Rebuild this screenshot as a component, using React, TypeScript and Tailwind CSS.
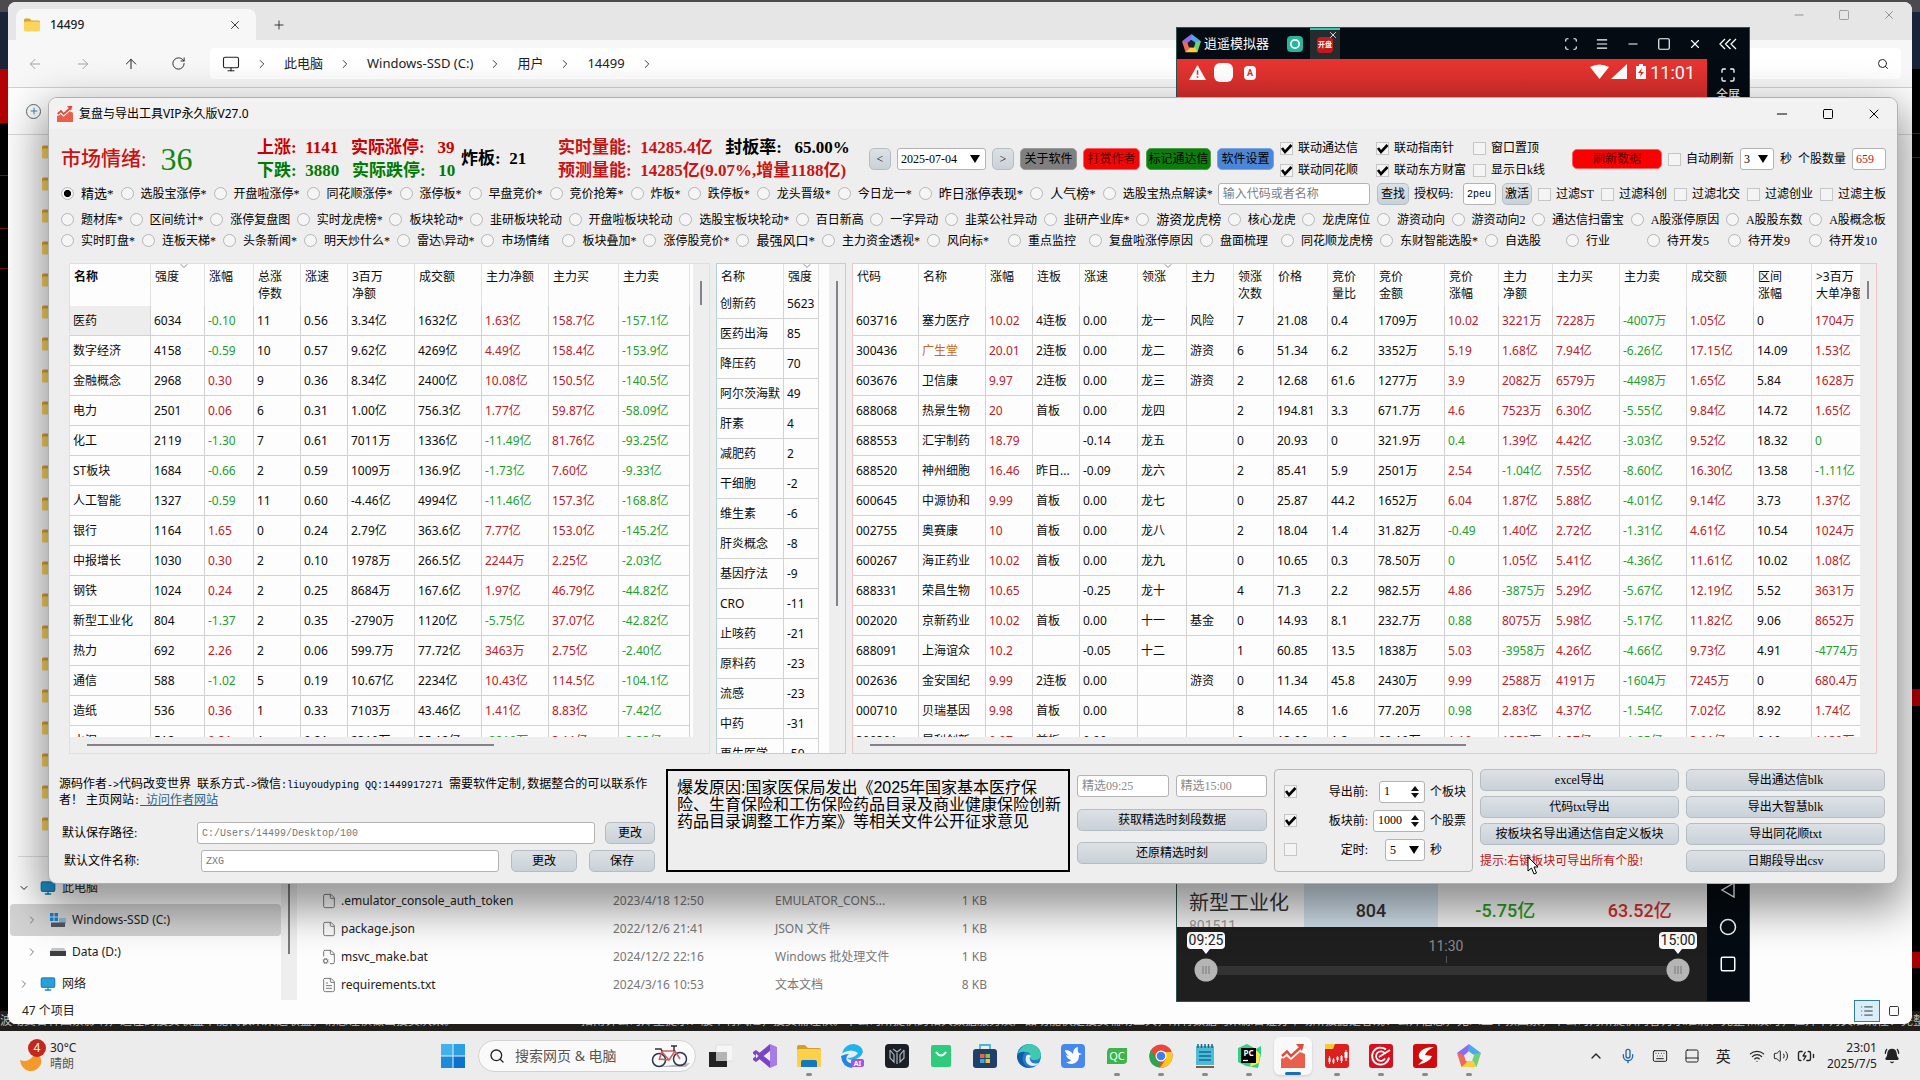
import { useState } from "react";
import type { ReactNode } from "react";
import {
  ArrowLeft,
  ArrowRight,
  ArrowUp,
  BatteryCharging,
  BellRing,
  ChevronRight,
  ChevronDown,
  ChevronUp,
  Circle,
  File,
  FileCog,
  FileText,
  Keyboard,
  List,
  Maximize,
  Menu,
  Mic,
  Minus,
  Monitor,
  PanelBottom,
  Plus,
  RotateCw,
  Scan,
  Search,
  Square,
  Volume2,
  Wifi,
  X,
} from "lucide-react";

const UI = "font-['Noto_Sans','Noto_Sans_CJK_SC',sans-serif]";
const SONG = "font-['Liberation_Serif','Noto_Sans_CJK_SC',serif]";
const MONO = "font-['Liberation_Mono','Noto_Sans_CJK_SC',monospace]";

/* ---------- data ---------- */

const ROW_1 = "精选* 选股宝涨停* 开盘啦涨停* 同花顺涨停* 涨停板* 早盘竞价* 竞价抢筹* 炸板* 跌停板* 龙头晋级* 今日龙一* 昨日涨停表现* 人气榜* 选股宝热点解读*".split(" ");
const ROW_2 = "题材库* 区间统计* 涨停复盘图 实时龙虎榜* 板块轮动* 韭研板块轮动 开盘啦板块轮动 选股宝板块轮动* 百日新高 一字异动 韭菜公社异动 韭研产业库* 游资龙虎榜 核心龙虎 龙虎席位 游资动向 游资动向2 通达信扫雷宝 A股涨停原因 A股股东数 A股概念板".split(" ");
const ROW_3 = "实时盯盘* 连板天梯* 头条新闻* 明天炒什么* 雷达\\异动* 市场情绪 板块叠加* 涨停股竞价* 最强风口* 主力资金透视* 风向标* 重点监控 复盘啦涨停原因 盘面梳理 同花顺龙虎榜 东财智能选股* 自选股 行业 待开发5 待开发9 待开发10".split(" ");
const LARGER = ["精选*", "昨日涨停表现*", "人气榜*", "游资龙虎榜", "最强风口*"];

type Tone = "sign" | "up" | "down" | "bid";
type Column = { title: string; width: string; tone?: Tone };

const parse = (text: string) =>
  text
    .trim()
    .split("\n")
    .map((line) => line.trim().split(/\s+/).map((cell) => (cell === "_" ? "" : cell)));

const SECTOR_COLUMNS: Column[] = [
  { title: "名称", width: "w-[81px]" },
  { title: "强度", width: "w-[54px]" },
  { title: "涨幅", width: "w-[49px]", tone: "sign" },
  { title: "总涨\n停数", width: "w-[47px]" },
  { title: "涨速", width: "w-[47px]" },
  { title: "3百万\n净额", width: "w-[67px]" },
  { title: "成交额", width: "w-[67px]" },
  { title: "主力净额", width: "w-[67px]", tone: "sign" },
  { title: "主力买", width: "w-[70px]", tone: "up" },
  { title: "主力卖", width: "w-[71px]", tone: "down" },
];

const SECTORS = parse(`
  医药 6034 -0.10 11 0.56 3.34亿 1632亿 1.63亿 158.7亿 -157.1亿
  数字经济 4158 -0.59 10 0.57 9.62亿 4269亿 4.49亿 158.4亿 -153.9亿
  金融概念 2968 0.30 9 0.36 8.34亿 2400亿 10.08亿 150.5亿 -140.5亿
  电力 2501 0.06 6 0.31 1.00亿 756.3亿 1.77亿 59.87亿 -58.09亿
  化工 2119 -1.30 7 0.61 7011万 1336亿 -11.49亿 81.76亿 -93.25亿
  ST板块 1684 -0.66 2 0.59 1009万 136.9亿 -1.73亿 7.60亿 -9.33亿
  人工智能 1327 -0.59 11 0.60 -4.46亿 4994亿 -11.46亿 157.3亿 -168.8亿
  银行 1164 1.65 0 0.24 2.79亿 363.6亿 7.77亿 153.0亿 -145.2亿
  中报增长 1030 0.30 2 0.10 1978万 266.5亿 2244万 2.25亿 -2.03亿
  钢铁 1024 0.24 2 0.25 8684万 167.6亿 1.97亿 46.79亿 -44.82亿
  新型工业化 804 -1.37 2 0.35 -2790万 1120亿 -5.75亿 37.07亿 -42.82亿
  热力 692 2.26 2 0.06 599.7万 77.72亿 3463万 2.75亿 -2.40亿
  通信 588 -1.02 5 0.19 10.67亿 2234亿 10.43亿 114.5亿 -104.1亿
  造纸 536 0.36 1 0.33 7103万 43.46亿 1.41亿 8.83亿 -7.42亿
  水泥 512 0.21 1 0.21 2310万 35.12亿 -2210万 3.11亿 -3.33亿
`);

const BRANCH_COLUMNS: Column[] = [
  { title: "名称", width: "w-[67px]" },
  { title: "强度", width: "w-[35px]" },
];

const BRANCHES = parse(`
  创新药 5623
  医药出海 85
  降压药 70
  阿尔茨海默 49
  肝素 4
  减肥药 2
  干细胞 -2
  维生素 -6
  肝炎概念 -8
  基因疗法 -9
  CRO -11
  止咳药 -21
  原料药 -23
  流感 -23
  中药 -31
  再生医学 -50
`);

const STOCK_COLUMNS: Column[] = [
  { title: "代码", width: "w-[66px]" },
  { title: "名称", width: "w-[67px]" },
  { title: "涨幅", width: "w-[47px]", tone: "up" },
  { title: "连板", width: "w-[47px]" },
  { title: "涨速", width: "w-[58px]" },
  { title: "领涨", width: "w-[49px]" },
  { title: "主力", width: "w-[47px]" },
  { title: "领涨\n次数", width: "w-[40px]" },
  { title: "价格", width: "w-[54px]" },
  { title: "竞价\n量比", width: "w-[47px]" },
  { title: "竞价\n金额", width: "w-[70px]" },
  { title: "竞价\n涨幅", width: "w-[54px]", tone: "bid" },
  { title: "主力\n净额", width: "w-[54px]", tone: "sign" },
  { title: "主力买", width: "w-[67px]", tone: "up" },
  { title: "主力卖", width: "w-[67px]", tone: "down" },
  { title: "成交额", width: "w-[67px]", tone: "up" },
  { title: "区间\n涨幅", width: "w-[58px]" },
  { title: ">3百万\n大单净额", width: "w-[67px]", tone: "sign" },
];

const STOCKS = parse(`
  603716 塞力医疗 10.02 4连板 0.00 龙一 风险 7 21.08 0.4 1709万 10.02 3221万 7228万 -4007万 1.05亿 0 1704万
  300436 广生堂 20.01 2连板 0.00 龙二 游资 6 51.34 6.2 3352万 5.19 1.68亿 7.94亿 -6.26亿 17.15亿 14.09 1.53亿
  603676 卫信康 9.97 2连板 0.00 龙三 游资 2 12.68 61.6 1277万 3.9 2082万 6579万 -4498万 1.65亿 5.84 1628万
  688068 热景生物 20 首板 0.00 龙四 _ 2 194.81 3.3 671.7万 4.6 7523万 6.30亿 -5.55亿 9.84亿 14.72 1.65亿
  688553 汇宇制药 18.79 _ -0.14 龙五 _ 0 20.93 0 321.9万 0.4 1.39亿 4.42亿 -3.03亿 9.52亿 18.32 0
  688520 神州细胞 16.46 昨日... -0.09 龙六 _ 2 85.41 5.9 2501万 2.54 -1.04亿 7.55亿 -8.60亿 16.30亿 13.58 -1.11亿
  600645 中源协和 9.99 首板 0.00 龙七 _ 0 25.87 44.2 1652万 6.04 1.87亿 5.88亿 -4.01亿 9.14亿 3.73 1.37亿
  002755 奥赛康 10 首板 0.00 龙八 _ 2 18.04 1.4 31.82万 -0.49 1.40亿 2.72亿 -1.31亿 4.61亿 10.54 1024万
  600267 海正药业 10.02 首板 0.00 龙九 _ 0 10.65 0.3 78.50万 0 1.05亿 5.41亿 -4.36亿 11.61亿 10.02 1.08亿
  688331 荣昌生物 10.65 _ -0.25 龙十 _ 4 71.3 2.2 982.5万 4.86 -3875万 5.29亿 -5.67亿 12.19亿 5.52 3631万
  002020 京新药业 10.02 首板 0.00 十一 基金 0 14.93 8.1 232.7万 0.88 8075万 5.98亿 -5.17亿 11.82亿 9.06 8652万
  688091 上海谊众 10.2 _ -0.05 十二 _ 1 60.85 13.5 1838万 5.03 -3958万 4.26亿 -4.66亿 9.73亿 4.91 -4774万
  002636 金安国纪 9.99 2连板 0.00 _ 游资 0 11.34 45.8 2430万 9.99 2588万 4191万 -1604万 7245万 0 680.4万
  000710 贝瑞基因 9.98 首板 0.00 _ _ 8 14.65 1.6 77.20万 0.98 2.83亿 4.37亿 -1.54亿 7.02亿 8.92 1.74亿
  300391 昂利创新 9.97 首板 0.00 _ _ 0 13.06 1.2 62.10万 1.10 1250万 1.37亿 -1.25亿 3.01亿 6.10 1120万
`);

const FILES = [
  { name: ".emulator_console_auth_token", date: "2023/4/18 12:50", kind: "EMULATOR_CONS...", size: "1 KB", Icon: File },
  { name: "package.json", date: "2022/12/6 21:41", kind: "JSON 文件", size: "1 KB", Icon: File },
  { name: "msvc_make.bat", date: "2024/12/2 22:16", kind: "Windows 批处理文件", size: "1 KB", Icon: FileCog },
  { name: "requirements.txt", date: "2024/3/16 10:53", kind: "文本文档", size: "8 KB", Icon: FileText },
];

/* ---------- small drawings ---------- */

const FolderIcon = ({ className = "h-4 w-4" }: { className?: string }) => (
  <svg viewBox="0 0 16 14" className={`${className} shrink-0`}>
    <path d="M0 2a1.5 1.5 0 0 1 1.500-1.500h4L7.500 2.500H14.500A1.500 1.500 0 0 1 16 4v3H0z" fill="#d9a32a" />
    <rect y="3.500" width="16" height="10" rx="1.500" fill="#fbd45c" />
  </svg>
);

const TrendIcon = ({ className = "h-4 w-4" }: { className?: string }) => (
  <svg viewBox="0 0 24 24" className={`${className} shrink-0`}>
    <path d="M0 24V15l5-3 5 4 9-8 5 2v14z" fill="#ea5f4b" />
    <path d="M1 13l5-5 4 4 10-9" fill="none" stroke="#f5f2f2" strokeWidth="5" />
    <path d="M1 12l5-4.500 4 4.500L20 3" fill="none" stroke="#dd4b3b" strokeWidth="2.600" />
    <path d="M15 0h8l-2 7z" fill="#dd4b3b" />
  </svg>
);

const Pentagon = ({ className = "h-5 w-5" }: { className?: string }) => (
  <svg viewBox="0 0 24 24" className={`${className} shrink-0`}>
    <path d="M12 0L0 9l8 4 4-7z" fill="#8c6cf0" />
    <path d="M12 0l12 9-6 4-7-6z" fill="#4aa9ee" />
    <path d="M24 9l-4.500 14L14 18l2-8z" fill="#6fd07a" />
    <path d="M19.500 23H4.500l2-7 10 1z" fill="#f6cf3f" />
    <path d="M4.500 23L0 9l7 2 3 7z" fill="#ee6a5a" />
    <path d="M12 7.500l5 3.700-1.900 5.800H8.900L7 11.200z" fill="#1c1f26" />
  </svg>
);

const DownArrow = () => (
  <svg viewBox="0 0 10 8" className="pointer-events-none absolute right-1.5 top-1/2 h-2 w-2.5 -translate-y-1/2">
    <path d="M0 0h10L5 8z" fill="#000" />
  </svg>
);

/* ---------- form controls ---------- */

const QtButton = ({ children, className = "" }: { children: ReactNode; className?: string }) => (
  <button
    type="button"
    className={`flex h-[22px] items-center justify-center whitespace-nowrap rounded-[5px] border border-[#b4bdc4] bg-linear-to-b from-[#dde1e5] to-[#c9d1d8] text-xs text-black ${className}`}
  >
    {children}
  </button>
);

const FIELD = "h-[22px] rounded-[3px] border border-[#b3b3b3] bg-white";

const Check = ({ children, label, on = false }: { children?: ReactNode; label?: string; on?: boolean }) => (
  <label className="flex items-center gap-[5px] whitespace-nowrap">
    <span className="relative block h-[13px] w-[13px]">
      <input
        type="checkbox"
        aria-label={label}
        defaultChecked={on}
        className="peer block h-[13px] w-[13px] appearance-none border border-[#c6c6c6] bg-[#f4f4f4]"
      />
      <svg viewBox="0 0 13 13" className="pointer-events-none absolute inset-0 hidden peer-checked:block">
        <path d="M2 6l3 4 6.500-7" fill="none" stroke="#000" strokeWidth="2.600" />
      </svg>
    </span>
    {children}
  </label>
);

const RadioItem = ({ name, value, onPick, wide = false }: { name: string; value: string; onPick: (v: string) => void; wide?: boolean }) => (
  <label className={`flex items-center gap-[7px] whitespace-nowrap ${wide ? "min-w-[74px]" : ""} ${LARGER.includes(name) ? "text-[13px]" : ""}`}>
    <input
      type="radio"
      name="view"
      checked={value === name}
      onChange={() => onPick(name)}
      className="h-[13px] w-[13px] shrink-0 appearance-none rounded-full border border-[#b5b5b5] bg-[#f5f5f5] checked:bg-[radial-gradient(circle,#000_42%,#f5f5f5_50%)]"
    />
    {name}
  </label>
);

const Spinner = ({ label, value, width }: { label: string; value: string; width: string }) => (
  <span className="relative justify-self-end">
    <input aria-label={label} defaultValue={value} className={`${FIELD} ${width} pl-1`} />
    <svg viewBox="0 0 8 12" className="absolute right-1.5 top-[5px] h-3 w-2">
      <path d="M0 5l4-5 4 5zM0 7l4 5 4-5z" fill="#111" />
    </svg>
  </span>
);

/* ---------- tables ---------- */

const toneClass = (tone: Tone | undefined, value: string) => {
  if (!tone) return "";
  const n = parseFloat(value);
  const red = tone === "up" || (tone === "sign" && n > 0) || (tone === "bid" && n >= 1);
  return red ? "text-[#bd2026]" : "text-[#23a02b]";
};

type GridProps = {
  columns: Column[];
  rows: string[][];
  sorted: number;
  headClass: string;
  boldFirst?: boolean;
};

const DataTable = ({ columns, rows, sorted, headClass, boldFirst = false }: GridProps) => (
  <table className="w-px table-fixed border-separate border-spacing-0 text-left text-xs text-[#0c0c0c]">
    <thead>
      <tr className={headClass}>
        {columns.map((col, i) => (
          <th
            key={i}
            className={`relative whitespace-pre border-r border-[#e2e2e2] pl-1 pt-1 align-top leading-[17px] ${col.width} ${boldFirst && i === 0 ? "font-bold" : "font-normal"}`}
          >
            {col.title}
            {i === sorted && <ChevronDown className="absolute -top-1 left-1/2 h-3 w-3 text-[#666]" strokeWidth={1.5} />}
          </th>
        ))}
      </tr>
    </thead>
    <tbody>
      {rows.map((row, r) => (
        <tr key={r}>
          {row.map((cell, c) => (
            <td
              key={c}
              className={`h-[30px] overflow-hidden whitespace-nowrap border-b border-r border-[#d2d2d2] pl-[3px] leading-4 ${toneClass(columns[c].tone, cell)} ${boldFirst && r === 0 && c === 0 ? "bg-[#ededed]" : ""} ${cell === "广生堂" ? "text-[#c8661e]" : ""}`}
            >
              {cell}
            </td>
          ))}
        </tr>
      ))}
    </tbody>
  </table>
);

const WideTable = ({ border, thumb, bar, ...grid }: GridProps & { border: string; thumb: string; bar: string }) => (
  <section className={`flex h-[491px] min-w-0 border ${border}`}>
    <div className="flex min-w-0 flex-1 flex-col">
      <div className="min-h-0 flex-1 overflow-hidden bg-[#fdfdfd]">
        <DataTable {...grid} />
      </div>
      <div className="flex h-4 items-center px-[17px]">
        <div className={`h-0.5 bg-[#85808a] ${bar}`} />
      </div>
    </div>
    <div className="flex w-4 justify-center pt-[17px]">
      <div className={`w-0.5 bg-[#85808a] ${thumb}`} />
    </div>
  </section>
);

/* ---------- main tool window ---------- */

const ToolHeader = () => (
  <div className="flex h-[46px] items-center whitespace-nowrap pl-3 pr-[11px]">
    <div className="flex w-[196px] items-center text-xl font-medium text-[#cc1111]">
      市场情绪:
      <span className="pl-[14px] text-[32px] font-normal leading-9 text-[#118811]">36</span>
    </div>
    <div className="w-[204px] whitespace-pre text-[17px] font-bold leading-[23px] text-[#c80000]">
      <p>上涨:  1141   实际涨停:   39</p>
      <p className="text-[#007a00]">下跌:  3880   实际跌停:   10</p>
    </div>
    <p className="w-[97px] whitespace-pre text-[17px] font-bold">炸板:  21</p>
    <div className="w-[311px] whitespace-pre text-[17px] font-bold leading-[23px] text-[#c81414]">
      <p>
        实时量能:  14285.4亿   <span className="text-black">封板率:   65.00%</span>
      </p>
      <p>预测量能:  14285亿(9.07%,增量1188亿)</p>
    </div>
    <div className="flex flex-1 items-center gap-[6px]">
      <QtButton className="w-[22px]">&lt;</QtButton>
      <span className="relative">
        <select aria-label="日期" className={`${FIELD} w-[89px] appearance-none pl-[3px]`}>
          <option>2025-07-04</option>
        </select>
        <DownArrow />
      </span>
      <QtButton className="w-[22px]">&gt;</QtButton>
      <button type="button" className="h-[22px] w-[57px] rounded-[5px] border border-[#9a9a9a] bg-[#7f7f7f]">关于软件</button>
      <button type="button" className="h-[22px] w-[57px] rounded-[5px] border border-[#f86060] bg-[#ee0808] text-[#5c0000]">打赏作者</button>
      <button type="button" className="h-[22px] w-[65px] rounded-[5px] border border-[#4c9c4c] bg-[#0a7d0a]">标记通达信</button>
      <button type="button" className="h-[22px] w-[57px] rounded-[5px] border border-[#7da6de] bg-[#4b87d6]">软件设置</button>
      <div className="grid grid-cols-[96px_97px_72px] gap-y-1.5">
        <Check on>联动通达信</Check>
        <Check on>联动指南针</Check>
        <Check>窗口置顶</Check>
        <Check on>联动同花顺</Check>
        <Check on>联动东方财富</Check>
        <Check>显示日k线</Check>
      </div>
      <button type="button" className="ml-auto h-5 w-[90px] rounded-[5px] border border-[#f86060] bg-[#fa0000] text-[#5c0000]">刷新数据</button>
      <Check>自动刷新</Check>
      <span className="relative">
        <select aria-label="刷新间隔" className={`${FIELD} w-[34px] appearance-none pl-[3px]`}>
          <option>3</option>
        </select>
        <DownArrow />
      </span>
      <span>秒</span>
      <label htmlFor="stock-count">个股数量</label>
      <input id="stock-count" defaultValue="659" className={`${FIELD} w-[34px] pl-[3px] text-[#c01818]`} />
    </div>
  </div>
);

const ViewPicker = () => {
  const [view, setView] = useState("精选*");
  return (
    <div className="pl-3 pr-[11px] pt-px">
      <div className="flex h-[22px] items-center">
        <div className="flex gap-[7px]">
          {ROW_1.map((name) => (
            <RadioItem key={name} name={name} value={view} onPick={setView} />
          ))}
        </div>
        <input aria-label="代码或名称" placeholder="输入代码或者名称" className={`${FIELD} ml-[5px] min-w-0 flex-1 pl-1 placeholder:text-[#7d7d7d]`} />
        <QtButton className="ml-[7px] w-8">查找</QtButton>
        <label htmlFor="licence" className="ml-[5px] w-[49px]">授权码:</label>
        <input id="licence" defaultValue="2peu" className={`${FIELD} ${MONO} w-[33px] pl-[3px] text-[10px]`} />
        <QtButton className="ml-[6px] mr-[6px] w-[30px]">激活</QtButton>
        <div className="flex gap-[7px]">
          {["过滤ST", "过滤科创", "过滤北交", "过滤创业", "过滤主板"].map((name) => (
            <Check key={name}>{name}</Check>
          ))}
        </div>
      </div>
      <div className="mt-1 flex h-[21px] items-center justify-between">
        {ROW_2.map((name) => (
          <RadioItem key={name} name={name} value={view} onPick={setView} />
        ))}
      </div>
      <div className="flex h-[21px] items-center gap-[7px]">
        {ROW_3.map((name) => (
          <RadioItem key={name} name={name} value={view} onPick={setView} wide />
        ))}
      </div>
    </div>
  );
};

const Latin = ({ children }: { children: string }) => <span className={`${MONO} text-[10px]`}>{children}</span>;

const ToolFooter = () => (
  <div className="grid grid-cols-[600px_minmax(0,1fr)_190px_199px_405px] gap-[7px] pb-[11px] pl-2.5 pr-3 pt-[15px]">
    <div className="flex flex-col justify-between">
      <p className="pr-1 pt-2 leading-[14px]">
        源码作者<Latin>-&gt;</Latin>代码改变世界&nbsp; 联系方式<Latin>-&gt;</Latin>微信<Latin>:liuyoudyping QQ:1449917271</Latin>&nbsp; 需要软件定制<Latin>,</Latin>数据整合的可以联系作者！ 主页网站<Latin>:</Latin>
        <a href="#author" className="text-[#2c628b] underline">&nbsp; 访问作者网站</a>
      </p>
      <div className="flex flex-col gap-1.5 pr-1">
        <div className="flex items-center">
          <label htmlFor="path" className="w-[138px] pl-[3px]">默认保存路径:</label>
          <input id="path" defaultValue="C:/Users/14499/Desktop/100" className={`${FIELD} ${MONO} min-w-0 flex-1 pl-1 text-[10px] text-[#777]`} />
          <QtButton className="ml-2.5 w-[50px]">更改</QtButton>
        </div>
        <div className="flex items-center">
          <label htmlFor="file" className="w-[142px] pl-[5px]">默认文件名称:</label>
          <input id="file" defaultValue="ZXG" className={`${FIELD} ${MONO} min-w-0 flex-1 pl-1 text-[10px] text-[#777]`} />
          <QtButton className="ml-3 w-[66px]">更改</QtButton>
          <QtButton className="ml-3 w-[66px]">保存</QtButton>
        </div>
      </div>
    </div>

    <div className="border-2 border-black pl-[9px] pr-0.5 pt-2 font-['Liberation_Sans','Noto_Sans_CJK_SC',sans-serif] text-base leading-[17px]">
      爆发原因:国家医保局发出《2025年国家基本医疗保险、生育保险和工伤保险药品目录及商业健康保险创新药品目录调整工作方案》等相关文件公开征求意见
    </div>

    <div className="flex flex-col pt-1.5">
      <div className="grid grid-cols-2 gap-[7px]">
        <input aria-label="开始时刻" placeholder="精选09:25" className={`${FIELD} w-full pl-1 placeholder:text-[#8a8a8a]`} />
        <input aria-label="结束时刻" placeholder="精选15:00" className={`${FIELD} w-full pl-1 placeholder:text-[#8a8a8a]`} />
      </div>
      <QtButton className="mt-3">获取精选时刻段数据</QtButton>
      <QtButton className="mt-[11px]">还原精选时刻</QtButton>
    </div>

    <div className="grid grid-cols-[13px_66px_1fr_45px] content-center items-center gap-x-[5px] gap-y-[7px] rounded border border-[#b9b9b9] pl-[9px]">
      <Check on label="导出板块" />
      <span className="justify-self-end">导出前:</span>
      <Spinner label="板块数" value="1" width="w-[46px]" />
      <span>个板块</span>
      <Check on label="导出股票" />
      <span className="justify-self-end">板块前:</span>
      <Spinner label="股票数" value="1000" width="w-[52px]" />
      <span>个股票</span>
      <Check label="定时导出" />
      <span className="justify-self-end">定时:</span>
      <span className="relative justify-self-end">
        <select aria-label="秒数" className={`${FIELD} w-10 appearance-none pl-1`}>
          <option>5</option>
        </select>
        <DownArrow />
      </span>
      <span>秒</span>
    </div>

    <div className="grid grid-cols-2 content-start gap-x-[7px] gap-y-[5px]">
      <QtButton>excel导出</QtButton>
      <QtButton>导出通达信blk</QtButton>
      <QtButton>代码txt导出</QtButton>
      <QtButton>导出大智慧blk</QtButton>
      <QtButton>按板块名导出通达信自定义板块</QtButton>
      <QtButton>导出同花顺txt</QtButton>
      <p className="self-center text-[#c01414]">提示:右键板块可导出所有个股!</p>
      <QtButton>日期段导出csv</QtButton>
    </div>
  </div>
);

const ToolWindow = () => (
  <main className="absolute left-[49px] right-[23px] top-[98px] overflow-hidden rounded-lg bg-[#eeeeee] shadow-[0_18px_44px_8px_rgba(0,0,0,0.42)] ring-1 ring-[#b0b0b0]">
    <header className={`flex h-[31px] items-center gap-1.5 bg-[#f2f2f2] pl-2 pr-[15px] text-xs ${UI}`}>
      <TrendIcon />
      <h1 className="flex-1">复盘与导出工具VIP永久版V27.0</h1>
      <div className="flex gap-[30px]">
        <button type="button" aria-label="最小化"><Minus className="h-4 w-4" strokeWidth={1.5} /></button>
        <button type="button" aria-label="最大化"><Square className="h-3 w-4" strokeWidth={2} /></button>
        <button type="button" aria-label="关闭"><X className="h-4 w-4" strokeWidth={1.5} /></button>
      </div>
    </header>
    <div className={`pt-[7px] text-xs ${SONG}`}>
      <ToolHeader />
      <ViewPicker />
    </div>
    <div className={`mx-5 mt-3 grid grid-cols-[641px_130px_minmax(0,1fr)] gap-[6px] ${UI}`}>
      <WideTable columns={SECTOR_COLUMNS} rows={SECTORS} sorted={1} headClass="h-[42px]" boldFirst border="border-[#f2ee5e]" thumb="h-6" bar="w-[407px]" />
      <section className="flex h-[491px] border border-[#b5d3df]">
        <div className="min-w-0 flex-1 overflow-hidden bg-[#fdfdfd]">
          <DataTable columns={BRANCH_COLUMNS} rows={BRANCHES} sorted={1} headClass="h-[25px]" />
        </div>
        <div className="flex w-4 justify-center pt-[17px]">
          <div className="h-[325px] w-0.5 bg-[#85808a]" />
        </div>
      </section>
      <WideTable columns={STOCK_COLUMNS} rows={STOCKS} sorted={5} headClass="h-[42px]" border="border-[#eec5ca]" thumb="h-[18px]" bar="w-[596px]" />
    </div>
    <div className={`text-xs ${SONG}`}>
      <ToolFooter />
    </div>
  </main>
);

/* ---------- file explorer ---------- */

const Explorer = () => (
  <div className={`absolute bottom-14 left-2 right-2 top-0.5 flex flex-col overflow-hidden rounded-lg bg-[#fdfdfd] text-xs text-[#222] ${UI}`}>
    <div className="flex h-[38px] items-end bg-[#e6e6e6] pl-2">
      <div className="flex h-[31px] w-60 items-center gap-2.5 rounded-t-lg bg-[#f7f7f7] px-2">
        <FolderIcon />
        <span className="flex-1 font-medium">14499</span>
        <X className="mr-1.5 h-3.5 w-3.5" strokeWidth={1.5} />
      </div>
      <Plus className="mb-2 ml-4 h-3.5 w-3.5" strokeWidth={1.5} />
      <div className="ml-auto flex items-center gap-8 pb-[18px] pr-4 text-[#888]">
        <Minus className="h-3.5 w-3.5" strokeWidth={1.5} />
        <Square className="h-3 w-3" strokeWidth={1.5} />
        <X className="h-3.5 w-3.5" strokeWidth={1.5} />
      </div>
    </div>
    <div className="flex h-12 items-center border-b border-[#cfcfcf] bg-[#f7f7f7] pl-[19px] pr-[11px]">
      <div className="flex w-[183px] gap-8">
        <ArrowLeft className="h-4 w-4 text-[#a3a3a3]" strokeWidth={1.5} />
        <ArrowRight className="h-4 w-4 text-[#a3a3a3]" strokeWidth={1.5} />
        <ArrowUp className="h-4 w-4" strokeWidth={1.5} />
        <RotateCw className="h-[15px] w-[15px]" strokeWidth={1.5} />
      </div>
      <nav className="flex h-[31px] flex-1 items-center gap-[15px] rounded bg-white pl-3 text-[13px]">
        <Monitor className="h-[18px] w-[18px]" strokeWidth={1.5} />
        <ChevronRight className="h-3.5 w-3.5" strokeWidth={1.5} />
        此电脑
        <ChevronRight className="h-3.5 w-3.5" strokeWidth={1.5} />
        Windows-SSD (C:)
        <ChevronRight className="h-3.5 w-3.5" strokeWidth={1.5} />
        用户
        <ChevronRight className="h-3.5 w-3.5" strokeWidth={1.5} />
        14499
        <ChevronRight className="h-3.5 w-3.5" strokeWidth={1.5} />
        <Search className="ml-auto mr-3 h-3 w-3" strokeWidth={2} />
      </nav>
    </div>
    <div className="flex h-[47px] items-center border-b border-[#d8d8d8] pl-[18px]">
      <span className="flex h-[15px] w-[15px] items-center justify-center rounded-full border border-[#5a6a75]">
        <Plus className="h-2.5 w-2.5 text-[#1c6fb5]" />
      </span>
    </div>
    <div className="flex min-h-0 flex-1">
      <aside className="flex w-[273px] flex-col justify-end overflow-hidden">
        {Array.from({ length: 22 }, (_, i) => (
          <div key={i} className="flex h-8 shrink-0 items-center pl-[34px]">
            <FolderIcon />
          </div>
        ))}
        <div className="ml-2.5 flex h-8 shrink-0 items-center"><div className="h-px w-full bg-[#ddd]" /></div>
        <div className="flex h-8 shrink-0 items-center gap-1.5 pl-2.5">
          <ChevronDown className="h-3 w-3" />
          <Monitor className="ml-1 h-4 w-4 fill-[#1d93cf] text-[#137bb4]" />
          此电脑
        </div>
        <div className="ml-0.5 flex h-8 shrink-0 items-center gap-1.5 rounded bg-[#d3d3d3] pl-4">
          <ChevronRight className="h-3 w-3 text-[#777]" />
          <svg viewBox="0 0 16 14" className="ml-1.5 h-4 w-4">
            <path d="M0 0h3.500v3.500H0zM4.500 0H8v3.500H4.500zM0 4.500h3.500V8H0zM4.500 4.500H8V8H4.500z" fill="#1583d6" />
            <path d="M9 5h7v6H9z" fill="#8fb6d2" />
            <path d="M1 9.500h14V14H1z" fill="#50575e" />
          </svg>
          Windows-SSD (C:)
        </div>
        <div className="flex h-8 shrink-0 items-center gap-1.5 pl-[18px]">
          <ChevronRight className="h-3 w-3 text-[#777]" />
          <svg viewBox="0 0 16 8" className="ml-1.5 h-2 w-4">
            <path d="M2 0h12l2 3H0z" fill="#c3c7ca" />
            <path d="M0 3h16v5H0z" fill="#3b4045" />
          </svg>
          Data (D:)
        </div>
        <div className="flex h-8 shrink-0 items-center gap-1.5 pl-2.5">
          <ChevronRight className="h-3 w-3 text-[#777]" />
          <Monitor className="ml-1 h-4 w-4 fill-[#29a0d8] text-[#2489be]" />
          网络
        </div>
      </aside>
      <div className="flex w-4 justify-center bg-[#eeeeee] pb-[46px]">
        <div className="w-0.5 bg-[#7b7b7b]" />
      </div>
      <div className="flex flex-1 items-end">
        <table className="mb-px ml-6 text-left">
          <tbody>
            {FILES.map(({ name, date, kind, size, Icon }) => (
              <tr key={name} className="h-7 text-[#777]">
                <td className="w-[292px] text-[#222]">
                  <span className="flex items-center gap-1">
                    <Icon className="h-4 w-4 text-[#777]" strokeWidth={1.5} />
                    {name}
                  </span>
                </td>
                <td className="w-[162px]">{date}</td>
                <td className="w-[148px]">{kind}</td>
                <td className="w-16 text-right">{size}</td>
              </tr>
            ))}
          </tbody>
        </table>
      </div>
    </div>
    <footer className="flex h-6 items-center pb-0.5 pl-3.5">
      <span className="flex-1">47 个项目</span>
      <span className="flex h-full w-[26px] items-center justify-center border border-[#2f7f9f] bg-[#d9eef7]">
        <List className="h-3.5 w-3.5" strokeWidth={1.5} />
      </span>
      <span className="flex w-8 justify-center pr-1"><Square className="h-3 w-3" strokeWidth={1.8} /></span>
    </footer>
  </div>
);

/* ---------- phone emulator ---------- */

const Knob = ({ time }: { time: string }) => (
  <div className="relative flex w-[38px] flex-col items-center">
    <span className="rounded-sm bg-white px-0.5 text-sm leading-[17px] text-[#222]">{time}</span>
    <svg viewBox="0 0 24 34" className="h-[34px] w-6">
      <path d="M8 0h8l-4 5z" fill="#fff" />
      <circle cx="12" cy="21" r="11.500" fill="#b5b5b5" />
      <path d="M9 17v8M12 17v8M15 17v8" stroke="#777" />
    </svg>
  </div>
);

const Emulator = () => (
  <div className="absolute bottom-[78px] left-[1176px] top-[27px] flex w-[574px] flex-col border border-[#2b5550] bg-[#050b12] font-['Roboto','Noto_Sans_CJK_SC',sans-serif] text-white">
    <div className="flex h-[31px] items-center">
      <Pentagon className="ml-[5px] mr-[3px] h-[19px] w-[19px]" />
      <span className="text-[13px]">逍遥模拟器</span>
      <span className="ml-[18px] flex h-4 w-4 items-center justify-center rounded bg-[#28b59b]">
        <Circle className="h-2.5 w-2.5" strokeWidth={4} />
      </span>
      <div className="relative ml-[7px] flex h-full w-[30px] items-center justify-center border-t-2 border-[#35c9b1] bg-[#262b2e]">
        <span className="rounded bg-[#c51a1c] px-px text-[7px] font-bold leading-4">开盘</span>
        <X className="absolute right-0.5 top-0 h-2.5 w-2.5" />
      </div>
      <div className="ml-auto flex items-center gap-[17px] pr-3">
        <Scan className="h-3.5 w-3.5" />
        <Menu className="h-3.5 w-3.5" />
        <Minus className="h-3.5 w-3.5" />
        <Square className="h-3.5 w-3.5" />
        <X className="h-3.5 w-3.5" />
        <svg viewBox="0 0 18 12" className="h-3 w-[18px]">
          <path d="M6 1L1 6l5 5M11.500 1l-5 5 5 5M17 1l-5 5 5 5" fill="none" stroke="#fff" strokeWidth="1.300" />
        </svg>
      </div>
    </div>
    <div className="flex min-h-0 flex-1">
      <div className="flex flex-1 flex-col">
        <div className="flex h-[60px] items-start bg-linear-to-b from-[#e93431] to-[#c62b29] px-3 pt-1">
          <svg viewBox="0 0 18 18" className="mt-px h-[17px] w-[17px]">
            <path d="M9 1l9 16H0z" fill="#fff" />
            <path d="M8.200 6.500h1.600v5H8.200zM8.200 13h1.600v1.600H8.200z" fill="#d8302e" />
          </svg>
          <span className="ml-2 h-[19px] w-[19px] rounded-md bg-white" />
          <span className="ml-[11px] mt-[3px] h-3.5 w-3 rounded-sm bg-white text-center text-[9px] font-bold leading-3.5 text-[#d8302e]">A</span>
          <svg viewBox="0 0 60 18" className="ml-auto h-[18px] w-[60px]">
            <path d="M0 4q9.500-5 19 0L9.500 16z" fill="#fff" />
            <path d="M37 1v15H21z" fill="#fff" />
            <path d="M46 3h3V1h4v2h3v13H46z" fill="#fff" />
            <path d="M52 5l-4 5h3l-1 4 4-5h-3z" fill="#d8302e" />
          </svg>
          <span className="text-lg leading-[20px]">11:01</span>
        </div>
        <div className="flex-1 bg-[#f3f3f3]" />
        <div className="grid h-[50px] grid-cols-[127px_134px_1fr_1fr] items-center overflow-hidden bg-[#f3f3f3] text-center text-lg font-medium leading-6 text-[#333]">
          <div className="self-end pl-3 text-left text-xl font-normal">
            <p>新型工业化</p>
            <p className="-mb-2 text-sm leading-[18px] text-[#999]">801511</p>
          </div>
          <div className="flex h-full items-center justify-center bg-[#cfdde8] pt-[18px]">804</div>
          <div className="pt-[18px] text-[#2b9c1c]">-5.75亿</div>
          <div className="pt-[18px] text-[#cf2f2f]">63.52亿</div>
        </div>
        <div className="relative flex h-[74px] justify-between bg-[#1f1f1f] px-2.5 pt-[5px]">
          <div className="absolute inset-x-[30px] top-[39px] h-[9px] bg-[#333]" />
          <Knob time="09:25" />
          <div className="flex flex-col items-center pl-2 pt-1 text-sm text-[#8b8b8b]">
            11:30
            <span className="h-[7px] w-px bg-[#555]" />
          </div>
          <Knob time="15:00" />
        </div>
      </div>
      <div className="flex w-[42px] flex-col items-center pb-7 pt-2">
        <Maximize className="h-4 w-4" />
        <span className="pt-1 text-xs">全屏</span>
        <svg viewBox="0 0 16 16" className="mt-auto h-4 w-4">
          <path d="M14 1v14L2 8z" fill="none" stroke="#fff" strokeWidth="1.400" />
        </svg>
        <Circle className="mt-5 h-[18px] w-[18px]" strokeWidth={2} />
        <Square className="mt-[19px] h-[18px] w-[18px]" strokeWidth={2} />
      </div>
    </div>
  </div>
);

/* ---------- taskbar ---------- */

const Tile = ({ children, running = false, active = false }: { children: ReactNode; running?: boolean; active?: boolean }) => (
  <div className={`relative mx-[3px] flex h-[38px] w-[38px] items-center justify-center rounded-md ${active ? "bg-[#f9f9f9] shadow" : ""}`}>
    <svg viewBox="0 0 24 24" className="h-6 w-6">{children}</svg>
    {running && <span className="absolute -bottom-px h-[3px] w-1.5 rounded-full bg-[#8a8a8a]" />}
    {active && <span className="absolute bottom-0 h-[3px] w-4 rounded-full bg-[#1b6fb3]" />}
  </div>
);

const Taskbar = () => (
  <footer className={`absolute inset-x-0 bottom-0 grid h-[49px] grid-cols-[1fr_auto_1fr] items-center bg-[#ececec] text-xs text-[#222] ${UI}`}>
    <div className="flex items-center gap-1 pl-[18px]">
      <svg viewBox="0 0 28 36" className="h-9 w-7">
        <path d="M2 22q9 4 15-7 8 3 6 11-4 8-12 7-8-2-9-11z" fill="#f39a2b" />
        <circle cx="19" cy="10" r="9" fill="#c4281c" />
        <text x="19" y="14" textAnchor="middle" fontSize="12" fill="#fff">4</text>
      </svg>
      <div className="leading-4">
        <p>30°C</p>
        <p className="text-[#555]">晴朗</p>
      </div>
    </div>

    <div className="flex items-center pl-0.5">
      <Tile>
        <path d="M0 0h11.500v11.500H0z" fill="#3fb3ee" />
        <path d="M12.500 0H24v11.500H12.500z" fill="#2a9fe4" />
        <path d="M0 12.500h11.500V24H0z" fill="#1b8bdb" />
        <path d="M12.500 12.500H24V24H12.500z" fill="#0a74cc" />
      </Tile>
      <label className="mx-[3px] flex h-8 w-[218px] items-center rounded-full border border-[#d2d2d2] bg-[#fafafa] pl-2.5">
        <Search className="h-4 w-4" />
        <input aria-label="搜索" placeholder="搜索网页 & 电脑" className="w-[145px] bg-transparent pl-2.5 text-sm placeholder:text-[#555]" />
        <svg viewBox="0 0 40 24" className="h-6 w-10" fill="none" strokeWidth="1.500">
          <path d="M6 23h30l4-4z" fill="#b9b9b9" />
          <circle cx="9" cy="16" r="6.500" stroke="#2a3550" />
          <circle cx="30" cy="15" r="6.500" stroke="#2a3550" />
          <path d="M9 16l3-9h13l5 8M12 8l7 8 6-9M19 16L9 15" stroke="#d25c5c" />
          <path d="M5 5h6l1 2M24 2v5M21 2h6" stroke="#333" />
        </svg>
      </label>
      <Tile>
        <path d="M7 1h17v16H7z" fill="#f6f6f6" stroke="#ccc" strokeWidth=".5" />
        <path d="M0 8h18v15H0z" fill="#222" />
        <path d="M7 8h11v9H7z" fill="#b5b5b5" />
      </Tile>
      <Tile>
        <path d="M17 0l7 3v18l-7 3z" fill="#a77be8" />
        <path d="M17 0v7L3 18l-3-2V8l3-2 14 11v7L0 9.500V14.500z" fill="#7a45c4" fillRule="nonzero" />
        <path d="M17 7.500v9L11.500 12zM3 9.500v5L5.500 12z" fill="#ececec" />
      </Tile>
      <Tile running>
        <path d="M0 3q0-2 2-2h6l3 3h11q2 0 2 2v4H0z" fill="#d89e24" />
        <rect y="5" width="24" height="18" rx="1.500" fill="#fbd04d" />
        <path d="M4 23v-5q0-2 2-2h12q2 0 2 2v5z" fill="#1477c4" />
      </Tile>
      <Tile>
        <path d="M1 9Q4 0 13 0q8 1 9 8-2 6-10 8-4 0-6-2 8 0 11-5-6-5-16 0z" fill="#20b4ef" />
        <path d="M0 12q4-2 8-2-5 4-1 8 3 2 6 1l-2 5Q1 23 0 12z" fill="#2385e6" />
        <rect x="10" y="15" width="13" height="8" rx="2" fill="#a455d9" />
        <text x="16.500" y="21.800" textAnchor="middle" fontSize="7" fontWeight="700" fill="#fff">AI</text>
      </Tile>
      <Tile>
        <rect width="24" height="24" rx="4" fill="#1a1f26" />
        <path d="M5 6v8l4 4v-7L5 6M19 6v8l-4 4v-7l4-5M8 5l4 3 4-3M12 9v11" fill="none" stroke="#aab2ba" strokeWidth="1.200" />
      </Tile>
      <Tile>
        <rect x="2" y="1" width="20" height="22" rx="2" fill="#2ecb7c" />
        <path d="M7 8q5 7 10 0" fill="none" stroke="#fff" strokeWidth="2" />
      </Tile>
      <Tile>
        <path d="M7 6V1h10v5" fill="none" stroke="#46b7d9" strokeWidth="1.800" />
        <rect y="5" width="24" height="19" rx="3" fill="#1f4069" />
        <path d="M7 10h4.500v4H7z" fill="#f0623d" />
        <path d="M12.500 10H17v4h-4.500z" fill="#8bc53f" />
        <path d="M7 15h4.500v4H7z" fill="#35a9e0" />
        <path d="M12.500 15H17v4h-4.500z" fill="#fcc12d" />
      </Tile>
      <Tile>
        <circle cx="12" cy="12" r="12" fill="#1b80cf" />
        <path d="M1 9Q5 0 13 0q9 1 11 10 0 6-7 6-4 0-4-3 1-5-4-5-5 0-8 1z" fill="#43c8b0" />
        <path d="M9 12q-2 8 6 10 5 0 7-3-7 2-9-3-1-3 1-4-3-3-5 0z" fill="#ececec" />
        <path d="M0 12q3-5 8-4-5 6 0 13 3 3 6 3Q1 24 0 12z" fill="#1259a6" />
      </Tile>
      <Tile>
        <rect width="24" height="24" rx="4" fill="#4588ee" />
        <path d="M4 6q5 0 8 4 0-6 5-7-1 5 1 6l3 1-3 1q0 8-7 9-4 0-6-2 4 0 5-2-4-1-5-5l3 1Q4 9 4 6z" fill="#fff" />
      </Tile>
      <Tile running>
        <path d="M4 4h18v12q0 4-4 4H2V8q0-2 2-4z" fill="#3cb54a" />
        <text x="12" y="16" textAnchor="middle" fontSize="11" fill="#fff">QC</text>
      </Tile>
      <Tile running>
        <circle cx="12" cy="12" r="11.500" fill="#e9473b" />
        <path d="M2 6l7 12-1 5Q0 20 .5 12 .5 9 2 6z" fill="#2da44f" />
        <path d="M2 6q2 9 8 11l1 6.500q-11-2-10.500-12z" fill="#2da44f" />
        <path d="M23 8H13l4 7-6 8.500Q22 24 23.500 13q0-3-.5-5z" fill="#fbc924" />
        <circle cx="12" cy="12" r="5.500" fill="#fff" />
        <circle cx="12" cy="12" r="4.300" fill="#3f7fe8" />
      </Tile>
      <Tile running>
        <rect x="3" y="2" width="18" height="19" fill="#4fb9d8" />
        <path d="M5 0v4M8.500 0v4M12 0v4M15.500 0v4M19 0v4" stroke="#2a6075" strokeWidth="1.500" />
        <path d="M6 8h12M6 12h12M6 16h12" stroke="#0d6d92" strokeWidth="1.500" />
        <path d="M3 22h18v2H3z" fill="#8c5a3a" />
      </Tile>
      <Tile running>
        <path d="M1 4l9-4 9 5 5-3v8l-3 14-12-2-8-4z" fill="#2fd08b" />
        <path d="M17 4l6 6-1 9-9 4z" fill="#f3ea4d" />
        <rect x="4" y="4" width="15" height="15" fill="#000" />
        <text x="11.500" y="12" textAnchor="middle" fontSize="8" fontWeight="700" fill="#fff">PC</text>
        <path d="M6 16.500h5" stroke="#fff" strokeWidth="1.300" />
      </Tile>
      <Tile active>
        <path d="M0 24V15l5-3 5 4 9-8 5 2v14z" fill="#ea5f4b" />
        <path d="M1 13l5-5 4 4 10-9" fill="none" stroke="#f9f9f9" strokeWidth="5" />
        <path d="M1 12l5-4.500 4 4.500L20 3" fill="none" stroke="#dd4b3b" strokeWidth="2.400" />
        <path d="M15 0h8l-2 7z" fill="#dd4b3b" />
      </Tile>
      <Tile running>
        <rect width="24" height="24" rx="3" fill="#dc1f1f" />
        <path d="M0 0h10L8 5H0z" fill="#f7c938" />
        <path d="M4.500 12v8M8.500 14v6M12.500 12v6M16.500 11v8M21 6v11" stroke="#fff" strokeWidth="1" />
        <path d="M3.500 14h2v4h-2zM7.500 15.500h2v3h-2zM11.500 13h2v3h-2zM15.500 12h2v5h-2zM19.500 8h3v6h-3z" fill="#fff" />
      </Tile>
      <Tile running>
        <rect width="24" height="24" rx="3" fill="#d80f1e" />
        <path d="M17 5.500a8.500 8.500 0 1 0 3 8M15.500 9a4.800 4.800 0 1 0 .5 5.500M10 13l11-7" fill="none" stroke="#fff" strokeWidth="1.800" />
      </Tile>
      <Tile running>
        <rect width="24" height="24" rx="3" fill="#cf0b0b" />
        <path d="M21 3q-9 0-13 4-4 4-1 8l3 1-5 5Q17 18 19 12l-7-1q2-5 9-8z" fill="#fff" />
      </Tile>
      <Tile running>
        <path d="M12 0L0 9l8 4 4-7z" fill="#8c6cf0" />
        <path d="M12 0l12 9-6 4-7-6z" fill="#4aa9ee" />
        <path d="M24 9l-4.500 14L14 18l2-8z" fill="#6fd07a" />
        <path d="M19.500 23H4.500l2-7 10 1z" fill="#f6cf3f" />
        <path d="M4.500 23L0 9l7 2 3 7z" fill="#ee6a5a" />
        <path d="M12 7.500l5 3.700-1.900 5.800H8.900L7 11.200z" fill="#ececec" />
      </Tile>
    </div>

    <div className="flex items-center justify-end pr-5">
      <ChevronUp className="mr-4 h-4 w-4" />
      <Mic className="mr-4 h-4 w-4 text-[#2566a8]" />
      <Keyboard className="mr-4 h-4 w-4" strokeWidth={1.5} />
      <PanelBottom className="mr-4 h-4 w-4" strokeWidth={1.5} />
      <span className="mr-[18px] text-[15px]">英</span>
      <Wifi className="mr-2 h-4 w-4" strokeWidth={1.8} />
      <Volume2 className="mr-2 h-4 w-4" strokeWidth={1.5} />
      <BatteryCharging className="mr-3 h-[18px] w-[18px]" strokeWidth={1.8} />
      <div className="mr-[7px] text-right leading-4">
        <p>23:01</p>
        <p>2025/7/5</p>
      </div>
      <BellRing className="h-4 w-4 fill-[#222]" />
    </div>
  </footer>
);

export default function App() {
  return (
    <div className="relative h-screen w-full overflow-hidden bg-black">
      <div className="flex h-full justify-between">
        <div className="w-3">
          <div className="h-[69px] bg-[#1a2438]" />
          <div className="h-[54px] bg-[#b40000]" />
          <div className="h-[53px] border-b border-[#7a1010]" />
          <div className="h-[53px] border-b border-[#7a1010]" />
          <div className="h-10 border-b border-[#7a1010]" />
        </div>
        <div className="w-3">
          <div className="h-[69px] bg-[#1a2438]" />
          <div className="h-[65px] border-b border-[#7a1010]" />
          <div className="h-6 border-b border-[#7a1010]" />
          <div className="h-[532px] border-b border-[#7a1010]" />
          <div className="h-4 bg-[#a80000]" />
          <div className="h-[246px]" />
          <div className="h-4 bg-[#a80000]" />
        </div>
      </div>
      <div className="absolute inset-x-0 top-0 h-3 bg-[#4d4a4e]" />
      <div className={`absolute inset-x-0 bottom-[49px] flex h-5 gap-[125px] overflow-hidden whitespace-nowrap bg-[#211f1c] text-xs leading-5 text-[#b9b9b9] ${UI}`}>
        <span>波动受各种因素影响，过往的投资收益不能代表未来之收益，请您谨慎做出投资决策。</span>
        <span>指南针公司郑重提示：股市有风险，投资需谨慎。本公司所提供的相关数据服务及产品功能仅是投资辅助工具，所有数据均来源合证分市场所披露是客观、公开信息，无人工干预因素，本公司对所提供内容力求准确、完整和及时，但并不对其准确性、完整性作保证</span>
      </div>
      <Explorer />
      <Emulator />
      <ToolWindow />
      <Taskbar />
      <svg viewBox="0 0 12 19" className="absolute left-[1527px] top-[856px] h-[19px] w-3">
        <path d="M1 1v14l3.500-3 2.500 6 2.500-1-2.500-6H11z" fill="#fff" stroke="#000" />
      </svg>
    </div>
  );
}
